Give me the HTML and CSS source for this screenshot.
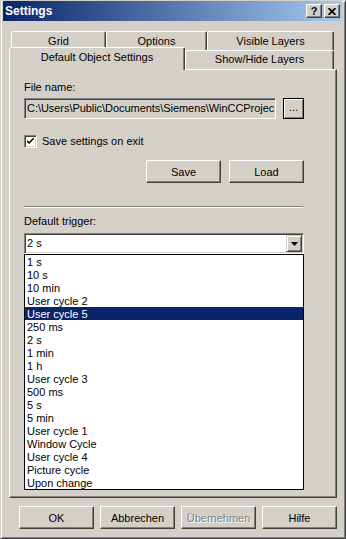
FILE: index.html
```html
<!DOCTYPE html>
<html lang="de">
<head>
	<meta charset="UTF-8" />
	<title>Settings</title>
	<link rel="stylesheet" href="styles.css">
</head>
<body>
	<div class="window">
		<div class="titlebar">
			<span class="titlebar__text">Settings</span>
			<div class="titlebar__buttons">
				<span class="caption-btn caption-btn--help">?</span>
				<span class="caption-btn">
					<svg width="8" height="7" viewBox="0 0 8 7"><path d="M0.5 0 L7.5 7 M7.5 0 L0.5 7" stroke="#000" stroke-width="1.7" fill="none"/></svg>
				</span>
			</div>
		</div>

		<div class="tabs">
			<div class="tab-row tab-row--back">
				<div class="tab tab--grid">Grid</div>
				<div class="tab tab--options">Options</div>
				<div class="tab tab--visible">Visible Layers</div>
			</div>
			<div class="tab-row tab-row--front">
				<div class="tab tab--active">Default Object Settings</div>
				<div class="tab tab--show">Show/Hide Layers</div>
			</div>

			<section class="panel">
				<div class="field-label">File name:</div>
				<div class="file-row">
					<div class="text-field">C:\Users\Public\Documents\Siemens\WinCCProjec</div>
					<button class="btn btn--browse" type="button">...</button>
				</div>

				<label class="check-row">
					<span class="checkbox">
						<svg width="7" height="7" viewBox="0 0 7 7"><path d="M0 2 L0 4 L2 6 L7 1 L7 -1 L2 4 Z" fill="#000"/></svg>
					</span>
					<span>Save settings on exit</span>
				</label>

				<div class="btn-row">
					<button class="btn" type="button">Save</button>
					<button class="btn" type="button">Load</button>
				</div>

				<div class="separator"></div>

				<div class="field-label field-label--trigger">Default trigger:</div>
				<div class="combo">
					<span class="combo__value">2 s</span>
					<span class="combo__arrow">
						<svg width="7" height="4" viewBox="0 0 7 4"><path d="M0 0 L7 0 L3.5 4 Z" fill="#000"/></svg>
					</span>
				</div>
				<ul class="list">
					<li class="list__item">1 s</li>
					<li class="list__item">10 s</li>
					<li class="list__item">10 min</li>
					<li class="list__item">User cycle 2</li>
					<li class="list__item list__item--selected">User cycle 5</li>
					<li class="list__item">250 ms</li>
					<li class="list__item">2 s</li>
					<li class="list__item">1 min</li>
					<li class="list__item">1 h</li>
					<li class="list__item">User cycle 3</li>
					<li class="list__item">500 ms</li>
					<li class="list__item">5 s</li>
					<li class="list__item">5 min</li>
					<li class="list__item">User cycle 1</li>
					<li class="list__item">Window Cycle</li>
					<li class="list__item">User cycle 4</li>
					<li class="list__item">Picture cycle</li>
					<li class="list__item">Upon change</li>
				</ul>
			</section>
		</div>

		<div class="dialog-buttons">
			<button class="btn" type="button">OK</button>
			<button class="btn" type="button">Abbrechen</button>
			<button class="btn btn--disabled" type="button">Übernehmen</button>
			<button class="btn" type="button">Hilfe</button>
		</div>
	</div>
</body>
</html>
```

FILE: styles.css
```css
*{
  box-sizing: border-box;
}

body{
  margin: 0;
  background: #d4d0c8;
  font-family: "Liberation Sans", Arial, sans-serif;
  font-size: 11px;
  color: #000;
}

.window{
  width: 346px;
  height: 539px;
  background: #d4d0c8;
  border: 1px solid;
  border-color: #d4d0c8 #404040 #404040 #d4d0c8;
  box-shadow: inset 1px 1px #fff, inset -1px -1px #808080;
  padding: 0 3px 0 2px;
}

/* title bar */
.titlebar{
  height: 20px;
  display: flex;
  align-items: center;
  justify-content: space-between;
  padding: 0 2px;
  background: linear-gradient(to right, #0a246a, #a6caf0);
}

.titlebar__text{
  color: #fff;
  font-weight: bold;
  font-size: 12px;
}

.titlebar__buttons{
  display: flex;
  gap: 2px;
}

.caption-btn{
  width: 16px;
  height: 14px;
  display: flex;
  align-items: center;
  justify-content: center;
  background: #d4d0c8;
  border: 1px solid;
  border-color: #fff #404040 #404040 #fff;
  box-shadow: inset -1px -1px #808080;
}

.caption-btn--help{
  font-weight: bold;
  font-size: 11px;
  line-height: 1;
}

/* tabs */
.tabs{
  width: 328px;
  margin: 10px 0 0 6px;
}

.tab-row{
  display: flex;
  align-items: flex-start;
}

.tab-row--back{
  height: 19px;
  padding-left: 2px;
}

.tab-row--front{
  height: 22px;
  margin-top: -3px;
}

.tab{
  height: 19px;
  display: flex;
  align-items: center;
  justify-content: center;
  background: #d4d0c8;
  border: 1px solid;
  border-bottom: none;
  border-color: #fff #404040 transparent #fff;
  border-radius: 2px 2px 0 0;
  box-shadow: inset -1px 0 #808080;
}

.tab--grid{ width: 95px; }
.tab--options{ width: 101px; }
.tab--visible{ width: 127px; }

.tab--active{
  position: relative;
  z-index: 1;
  width: 176px;
  height: 23px;
  padding-bottom: 4px;
}

.tab--show{
  width: 149px;
  margin-top: 3px;
  padding-bottom: 2px;
}

.panel{
  width: 328px;
  height: 429px;
  border: 1px solid;
  border-color: #fff #404040 #404040 #fff;
  box-shadow: inset -1px -1px #808080;
  padding: 11px 32px 0 14px;
}

.field-label{
  line-height: 13px;
}

.field-label--trigger{
  margin-top: 7px;
}

.file-row{
  display: flex;
  gap: 7px;
  margin-top: 4px;
}

.text-field{
  width: 252px;
  height: 21px;
  line-height: 19px;
  padding: 0 1px 0 2px;
  white-space: nowrap;
  overflow: hidden;
  letter-spacing: -0.05px;
  background: #d4d0c8;
  border: 1px solid;
  border-color: #808080 #fff #fff #808080;
  box-shadow: inset 1px 1px #404040, inset -1px -1px #d4d0c8;
}

/* buttons */
.btn{
  width: 75px;
  height: 23px;
  padding: 0;
  font: inherit;
  color: #000;
  background: #d4d0c8;
  border: 1px solid;
  border-color: #fff #404040 #404040 #fff;
  box-shadow: inset -1px -1px #808080;
  border-radius: 0;
}

.btn--browse{
  width: 21px;
  height: 21px;
  border-color: #000;
  box-shadow: inset 1px 1px #fff, inset -1px -1px #808080;
  line-height: 1;
  padding-bottom: 2px;
}

.btn--disabled{
  color: #808080;
  text-shadow: 1px 1px 0 #fff;
}

.check-row{
  display: flex;
  align-items: center;
  gap: 5px;
  margin-top: 16px;
  line-height: 13px;
}

.checkbox{
  width: 13px;
  height: 13px;
  display: flex;
  align-items: center;
  justify-content: center;
  background: #fff;
  border: 1px solid;
  border-color: #808080 #fff #fff #808080;
  box-shadow: inset 1px 1px #404040, inset -1px -1px #d4d0c8;
}

.btn-row{
  display: flex;
  justify-content: flex-end;
  gap: 8px;
  margin-top: 12px;
}

.separator{
  width: 279px;
  height: 2px;
  margin-top: 23px;
  border-top: 1px solid #808080;
  border-bottom: 1px solid #fff;
}

/* combo box + open list */
.combo{
  width: 280px;
  height: 21px;
  margin-top: 5px;
  display: flex;
  padding: 1px;
  background: #fff;
  border: 1px solid;
  border-color: #808080 #fff #fff #808080;
  box-shadow: inset 1px 1px #404040, inset -1px -1px #d4d0c8;
}

.combo__value{
  flex: 1;
  padding-left: 1px;
  line-height: 17px;
}

.combo__arrow{
  width: 16px;
  height: 17px;
  display: flex;
  align-items: center;
  justify-content: center;
  background: #d4d0c8;
  border: 1px solid;
  border-color: #d4d0c8 #404040 #404040 #d4d0c8;
  box-shadow: inset 1px 1px #fff, inset -1px -1px #808080;
}

.list{
  width: 280px;
  margin: 0;
  padding: 0;
  list-style: none;
  background: #fff;
  border: 1px solid #000;
}

.list__item{
  height: 13px;
  line-height: 14px;
  padding-left: 2px;
  white-space: nowrap;
}

.list__item--selected{
  background: #0a246a;
  color: #fff;
}

.dialog-buttons{
  display: flex;
  gap: 6px;
  margin-top: 8px;
  padding-left: 16px;
}
```
